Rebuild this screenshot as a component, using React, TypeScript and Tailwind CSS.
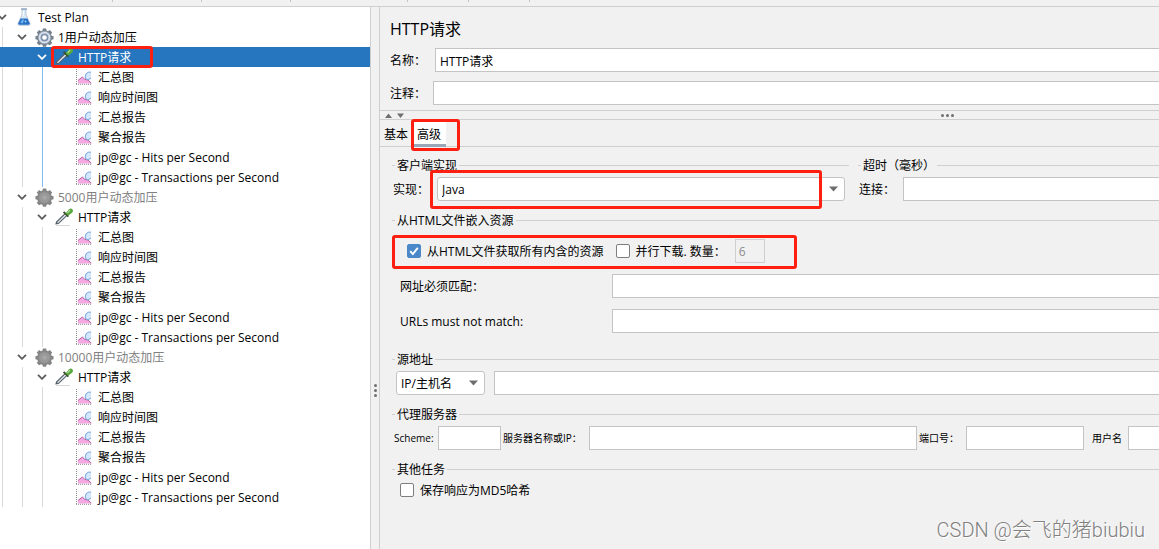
import type { ReactNode } from 'react'

type IconKind = 'plan' | 'gear' | 'gear-off' | 'sampler' | 'graph'

interface TreeRow {
  label: string
  depth: number
  icon: IconKind
  selected?: boolean
  disabled?: boolean
  activeBranch?: boolean
}

const LISTENERS = ['汇总图', '响应时间图', '汇总报告', '聚合报告', 'jp@gc - Hits per Second', 'jp@gc - Transactions per Second']

function threadGroup(label: string, active: boolean): TreeRow[] {
  return [
    { label, depth: 1, icon: active ? 'gear' : 'gear-off', disabled: !active },
    { label: 'HTTP请求', depth: 2, icon: 'sampler', selected: active },
    ...LISTENERS.map((name): TreeRow => ({ label: name, depth: 3, icon: 'graph', activeBranch: active })),
  ]
}

const TREE: TreeRow[] = [
  { label: 'Test Plan', depth: 0, icon: 'plan' },
  ...threadGroup('1用户动态加压', true),
  ...threadGroup('5000用户动态加压', false),
  ...threadGroup('10000用户动态加压', false),
]

const TOOLBAR_GAPS = ['w-[112px]', 'w-[88px]', 'w-[88px]', 'w-[116px]', 'w-[60px]', 'w-[60px]']

const GEAR_PATH = 'M8.2 0.6h3.6l.5 2.3 1.6.7 2-1.3 2.6 2.6-1.3 2 .7 1.6 2.1.5v3.4l-2.1.6-.7 1.6 1.3 2-2.6 2.6-2-1.3-1.6.7-.5 2.2H8.2l-.5-2.2-1.6-.7-2 1.3-2.6-2.6 1.3-2-.7-1.6L0 12.4V9l2.1-.5.7-1.6-1.3-2 2.6-2.6 2 1.3 1.6-.7z'

function TreeIcon({ kind }: { kind: IconKind }) {
  if (kind === 'plan') {
    return (
      <svg className="h-[18px] w-[14px]" viewBox="0 0 14 18">
        <path d="M5 1.5v5.5L1 15.2Q.4 17.3 2.6 17.3h8.8q2.2 0 1.6-2.1L9 7V1.5z" fill="#dbe9f7" stroke="#a9bdd2" strokeWidth=".8" />
        <path d="M3.6 10.5h6.8l2.2 4.8q.3 1.5-1.2 1.5H2.6q-1.5 0-1.2-1.5z" fill="#2470c4" />
        <path d="M3.2 14.5l2-3h2l-1.5 4z" fill="#6fb0ee" />
        <circle cx="8.5" cy="13.5" r=".9" fill="#b3d8fa" />
        <path d="M4 1h6" stroke="#8ba4bf" strokeWidth="1.4" />
        <path d="M6.3 3v5" stroke="#fff" strokeWidth="1" />
      </svg>
    )
  }
  if (kind === 'gear') {
    return (
      <svg className="h-[19px] w-[19px]" viewBox="0 0 20 21">
        <path d={GEAR_PATH} fill="#75808c" />
        <circle cx="10" cy="10.6" r="6.9" fill="#d9e2ee" stroke="#929eac" strokeWidth=".8" />
        <circle cx="10" cy="10.6" r="4.4" fill="#7f93ac" />
        <circle cx="10" cy="10.6" r="2.5" fill="#fff" />
      </svg>
    )
  }
  if (kind === 'gear-off') {
    return (
      <svg className="h-[19px] w-[19px]" viewBox="0 0 20 21">
        <path d={GEAR_PATH} fill="#858585" />
        <circle cx="10" cy="10.6" r="6.2" fill="#999" stroke="#8f8f8f" strokeWidth=".8" />
        <circle cx="10" cy="10.6" r="2.7" fill="#a6a6a6" />
      </svg>
    )
  }
  if (kind === 'sampler') {
    return (
      <svg className="h-[18px] w-[20px]" viewBox="0 0 20 18">
        <path d="M2 17.4h14" stroke="#9a9a9a" strokeWidth=".7" opacity=".6" />
        <path d="M1.2 16.6l1-3L10.5 5.4l2.6 2.6L4.6 16z" fill="#56606a" />
        <path d="M3 14.6l8.4-8.3 1 1L4.2 15z" fill="#e6edf2" />
        <path d="M9.6 3.8l4.8 4.8" stroke="#35521f" strokeWidth="1.8" />
        <path d="M11.6 5.4l3.2-3.8Q16.6-.2 18.3 1.3q1.5 1.6-.3 3.4l-3.6 2.9z" fill="#57a83c" />
        <path d="M13.5 4.8l2.7-2.6" stroke="#b5df9c" strokeWidth="1.1" />
      </svg>
    )
  }
  return (
    <svg className="h-4 w-4" viewBox="0 0 16 16">
      <rect x="1.5" width="14.5" height="15" fill="#fbfafd" />
      <path d="M2 14.5v-3L6.3 8l2.6 2.4 3 .6 3.4 3.5z" fill="#f5a8e2" />
      <path d="M2 11.5L6.3 8l2.6 2.4 3 .6 3.4 3.2" fill="none" stroke="#b4629f" strokeWidth="1" />
      <path d="M9.4 8.5q0-4.8 3-5.3l2.6.1v6.2l-2.6 1.3q-3-.2-3-2.3z" fill="#d3e8fd" />
      <path d="M15 3.2h-2.6Q9.2 4 9.2 8q.3 2.7 2.8 2.9l3-1.8" fill="none" stroke="#7aa5e0" strokeWidth="1" />
      <path d="M.5 0v15M0 15.3h16" stroke="#8a8a8a" strokeWidth="1" strokeDasharray="1 1" />
    </svg>
  )
}

function Chevron({ light }: { light?: boolean }) {
  return (
    <svg className={`h-[6px] w-[10px] ${light ? 'text-white' : 'text-[#5c5c5c]'}`} viewBox="0 0 10 6" fill="none" stroke="currentColor" strokeWidth="1.8">
      <path d="M1 .8l4 4 4-4" />
    </svg>
  )
}

function Mark({ className }: { className: string }) {
  return <span className={`pointer-events-none absolute z-10 rounded-[3px] border-3 border-[#ff1f10] ${className}`} />
}

function TreeItem({ row }: { row: TreeRow }) {
  const leaf = row.icon === 'graph'
  const color = row.selected ? 'bg-[#2675bf] text-white' : row.disabled ? 'text-[#808080]' : 'text-black'
  return (
    <li role="treeitem" aria-selected={!!row.selected} className={`relative flex h-5 items-center ${color}`}>
      {Array.from({ length: row.depth }, (_, i) => (
        <span key={i} className="flex h-full w-5 shrink-0 justify-center">
          {!row.selected && <span className={`h-full w-px ${row.activeBranch && i === 2 ? 'bg-[#80bcf5]' : 'bg-[#dadada]'}`} />}
        </span>
      ))}
      <span className="flex w-5 shrink-0 justify-center">{!leaf && <Chevron light={row.selected} />}</span>
      <span className="mr-0.5 flex w-6 shrink-0 justify-center"><TreeIcon kind={row.icon} /></span>
      <span className="pt-0.5 whitespace-nowrap">{row.label}</span>
      {row.selected && <Mark className="-inset-y-px left-[59px] w-[102px]" />}
    </li>
  )
}

function Field({ label, labelClass, value = '' }: { label: string; labelClass: string; value?: string }) {
  return (
    <label className="flex items-center">
      <span className={`shrink-0 pt-0.5 whitespace-nowrap ${labelClass}`}>{label}</span>
      <input defaultValue={value} className="h-6 min-w-0 flex-1 border border-r-0 border-[#c4c4c4] bg-white px-1 pt-0.5" />
    </label>
  )
}

function Group({ title, className = '', children }: { title: string; className?: string; children: ReactNode }) {
  return (
    <fieldset className={`min-w-0 ${className}`}>
      <legend className="flex h-4 w-full items-center">
        <span className="h-px w-[3px] bg-[#cfcfcf]" />
        <span className="mx-0.5 pt-0.5 whitespace-nowrap">{title}</span>
        <span className="h-px flex-1 bg-[#cfcfcf]" />
      </legend>
      {children}
    </fieldset>
  )
}

function Select({ value, label, className }: { value: string; label: string; className: string }) {
  return (
    <span className={`relative flex h-6 ${className}`}>
      <select aria-label={label} className="w-full appearance-none rounded-[3px] border border-[#c4c4c4] bg-white px-1 pt-0.5">
        <option>{value}</option>
      </select>
      <svg className="pointer-events-none absolute top-[9px] right-[7px] h-[6px] w-[9px]" viewBox="0 0 9 6"><path d="M0 .5h9L4.5 5.5z" fill="#6e6e6e" /></svg>
    </span>
  )
}

function Checkbox({ label, checked }: { label: string; checked?: boolean }) {
  return (
    <label className="flex items-center gap-1.5 whitespace-nowrap">
      <span className="relative flex">
        <input type="checkbox" defaultChecked={checked} className="peer h-[14px] w-[14px] appearance-none rounded-[2px] border border-[#7e7e7e] bg-white checked:border-[#4a88c9] checked:bg-[#4a88c9]" />
        <svg className="pointer-events-none absolute inset-0 hidden h-[14px] w-[14px] peer-checked:block" viewBox="0 0 14 14" fill="none" stroke="#fff" strokeWidth="1.9"><path d="M3.2 7.2l2.6 2.9 5-6.3" /></svg>
      </span>
      <span className="pt-0.5">{label}</span>
    </label>
  )
}

const smallInput = 'h-6 min-w-0 border border-[#c4c4c4] bg-white px-1'

export default function App() {
  return (
    <div className="relative flex min-h-screen flex-col overflow-hidden bg-[#f1f1f1] font-['Open_Sans','Noto_Sans_CJK_SC',sans-serif] text-[12px] leading-4 text-black">
      <div className="flex h-[7px] border-b border-[#cfcfcf]">
        {TOOLBAR_GAPS.map((gap, i) => (
          <span key={i} className="flex">
            <span className={gap} />
            <span className="h-0.5 w-px bg-[#c4c4c4]" />
          </span>
        ))}
      </div>

      <div className="flex flex-1">
        <aside className="w-[371px] shrink-0 overflow-hidden border-r border-[#cfcfcf] bg-white">
          <ul role="tree" className="-ml-2">
            {TREE.map((row, i) => <TreeItem key={i} row={row} />)}
          </ul>
        </aside>

        <div className="flex w-[9px] shrink-0 flex-col items-center gap-0.5 border-r border-[#cfcfcf] pt-[377px]">
          <span className="h-[3px] w-[3px] rounded-full bg-[#6e6e6e]" />
          <span className="h-[3px] w-[3px] rounded-full bg-[#6e6e6e]" />
          <span className="h-[3px] w-[3px] rounded-full bg-[#6e6e6e]" />
        </div>

        <main className="min-w-0 flex-1">
          <h1 className="pt-3 pl-[10px] text-[16px] leading-5">HTTP请求</h1>
          <div className="mt-[9px] flex flex-col gap-[9px] pl-[10px]">
            <Field label="名称：" labelClass="w-[45px]" value="HTTP请求" />
            <Field label="注释：" labelClass="w-[43px]" />
          </div>

          <div className="mt-[5px] flex h-[10px] items-center border-y border-[#cfcfcf] pl-[5px]">
            <svg className="h-[5px] w-[19px]" viewBox="0 0 19 5" fill="#6e6e6e"><path d="M0 5l3.5-4.5L7 5zM12 .5h7L15.5 5z" /></svg>
            <span className="mr-[205px] ml-auto flex gap-0.5">
              <span className="h-[3px] w-[3px] rounded-full bg-[#6e6e6e]" />
              <span className="h-[3px] w-[3px] rounded-full bg-[#6e6e6e]" />
              <span className="h-[3px] w-[3px] rounded-full bg-[#6e6e6e]" />
            </span>
          </div>

          <div role="tablist" className="flex h-[27px] border-b border-[#cfcfcf] pl-1">
            <button role="tab" aria-selected="false" className="w-[30px] pt-1 text-left">基本</button>
            <span className="relative flex">
              <button role="tab" aria-selected="true" className="mt-0.5 -mb-px w-8 border-b-[3px] border-[#9aa7b8] bg-white pt-1 pr-0.5">高级</button>
              <Mark className="-top-px -left-[3px] h-8 w-[49px]" />
            </span>
          </div>

          <div className="pl-3">
            <div className="grid grid-cols-[457fr_301fr] gap-[9px] pt-[10px]">
              <Group title="客户端实现">
                <div className="mt-1 flex items-center pr-1">
                  <span className="w-[45px] shrink-0 pt-0.5 pl-px whitespace-nowrap">实现：</span>
                  <span className="relative flex flex-1">
                    <Select label="实现" value="Java" className="w-full" />
                    <Mark className="-top-[7px] right-[23px] -left-[7px] h-[39px]" />
                  </span>
                </div>
              </Group>
              <Group title="超时（毫秒）">
                <div className="mt-1 pl-px">
                  <Field label="连接：" labelClass="w-11" />
                </div>
              </Group>
            </div>

            <Group title="从HTML文件嵌入资源" className="mt-[11px]">
              <div className="relative mt-[11px] flex h-6 items-center pl-[15px]">
                <Checkbox label="从HTML文件获取所有内含的资源" checked />
                <span className="w-3" />
                <Checkbox label="并行下载. 数量：" />
                <input aria-label="数量" disabled defaultValue="6" className="ml-[9px] h-6 w-[30px] border border-[#cfcfcf] px-[3px] text-[#8c8c8c]" />
                <Mark className="-top-1 left-0 h-[34px] w-[405px]" />
              </div>
              <div className="mt-[11px] flex flex-col gap-[11px] pl-2">
                <Field label="网址必须匹配：" labelClass="w-[212px]" />
                <Field label="URLs must not match:" labelClass="w-[212px]" />
              </div>
            </Group>

            <Group title="源地址" className="mt-[18px]">
              <div className="mt-1 flex gap-[9px] pl-1">
                <Select label="源地址类型" value="IP/主机名" className="w-[89px]" />
                <input aria-label="源地址" className={`${smallInput} flex-1 border-r-0`} />
              </div>
            </Group>

            <Group title="代理服务器" className="mt-[11px]">
              <div className="mt-1 flex items-center pl-0.5 text-[10px] whitespace-nowrap">
                <label htmlFor="scheme" className="w-11">Scheme:</label>
                <input id="scheme" className={`${smallInput} w-[63px]`} />
                <label htmlFor="server" className="w-[88px] pl-0.5">服务器名称或IP：</label>
                <input id="server" className={`${smallInput} flex-1`} />
                <label htmlFor="port" className="w-[49px] pl-0.5">端口号：</label>
                <input id="port" className={`${smallInput} w-[118px]`} />
                <label htmlFor="user" className="w-11 pl-2">用户名</label>
                <input id="user" className={`${smallInput} w-[31px] border-r-0`} />
              </div>
            </Group>

            <Group title="其他任务" className="mt-[11px]">
              <div className="mt-1 pl-2">
                <Checkbox label="保存响应为MD5哈希" />
              </div>
            </Group>
          </div>
        </main>
      </div>

      <div className="pointer-events-none absolute right-[14px] bottom-[7px] font-['Roboto','Noto_Sans_CJK_SC',sans-serif] text-[20px] leading-6 font-light text-[#808080] [text-shadow:1px_1px_0_#ffffff]">CSDN @会飞的猪biubiu</div>
    </div>
  )
}
